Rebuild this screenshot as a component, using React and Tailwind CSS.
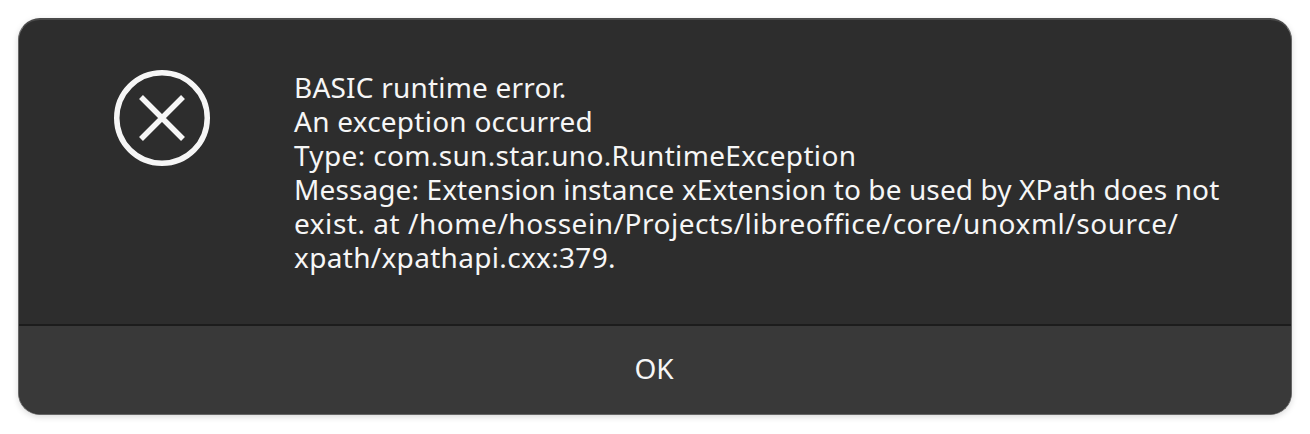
function ErrorIcon() {
  return (
    <svg width="98" height="98" viewBox="0 0 98 98" fill="none" stroke="#f6f6f6" strokeWidth="5.5">
      <circle cx="49" cy="49" r="45.25" />
      <path d="M28 28L70 70M70 28L28 70" />
    </svg>
  );
}

// tracking is per line, the fallback font doesn't run quite the same width everywhere
const lines = [
  { text: "BASIC runtime error.", className: "tracking-[0.2px]" },
  { text: "An exception occurred", className: "tracking-[0.24px]" },
  { text: "Type: com.sun.star.uno.RuntimeException", className: "tracking-[0.35px]" },
  { text: "Message: Extension instance xExtension to be used by XPath does not", className: "tracking-[0.11px]" },
  { text: "exist. at /home/hossein/Projects/libreoffice/core/unoxml/source/", className: "tracking-[0.54px]" },
  { text: "xpath/xpathapi.cxx:379.", className: "tracking-[0.32px]" },
];

export default function App() {
  return (
    <div className="w-[1310px] h-[434px] bg-white p-[18px] font-['Noto_Sans',sans-serif]">
      {/* Dialog */}
      <div className="h-[397px] flex flex-col overflow-hidden rounded-[22px] border border-[#666666] border-t-2 border-t-[#4a4a4a] bg-[#2d2d2d] shadow-[0_2px_6px_rgba(0,0,0,0.15)]">
        <div className="h-[304px] flex pt-[49px] pl-[94px]">
          <ErrorIcon />
          <div className="ml-[83px] pt-[1px] text-[28px] leading-[34px] text-[#f6f6f6] whitespace-nowrap">
            {lines.map((line) => (
              <div key={line.text} className={line.className}>
                {line.text}
              </div>
            ))}
          </div>
        </div>
        <button className="flex-1 border-t-2 border-[#1c1c1c] bg-[#393939] pb-[4px] pr-[2px] text-[28px] text-[#f6f6f6]">
          OK
        </button>
      </div>
    </div>
  );
}
